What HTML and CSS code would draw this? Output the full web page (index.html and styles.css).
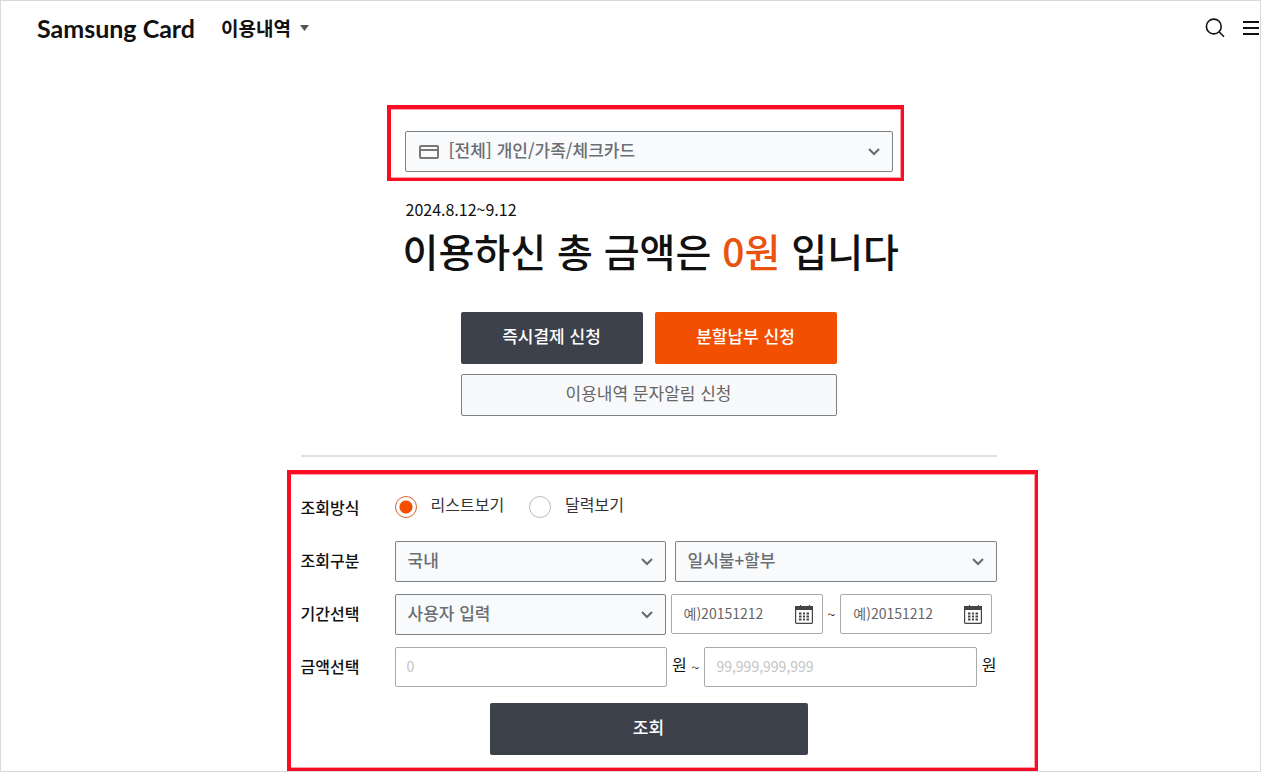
FILE: index.html
```html
<!DOCTYPE html>
<html lang="ko">
<head>
    <meta charset="UTF-8">
    <meta name="viewport" content="width=device-width, initial-scale=1.0">
    <title>이용내역 - Samsung Card</title>
    <link rel="stylesheet" href="styles.css">
</head>
<body>
    <header class="header">
        <a class="logo" href="#">Samsung Card</a>
        <button type="button" class="menu-title">이용내역
            <svg class="caret" width="9" height="6" viewBox="0 0 9 6"><path d="M0 0h9L4.500 6z" fill="#555"/></svg>
        </button>
        <div class="header-icons">
            <button type="button" class="icon-button" aria-label="검색">
                <svg width="20" height="20" viewBox="0 0 20 20" fill="none" stroke="#111" stroke-width="1.600"><circle cx="8.800" cy="8.500" r="7.400"/><path d="M14 13.800l5 5"/></svg>
            </button>
            <button type="button" class="icon-button" aria-label="전체메뉴">
                <svg width="16" height="14" viewBox="0 0 16 14" fill="#111"><path d="M0 0h16v2H0zM0 6h16v2H0zM0 12h16v2H0z"/></svg>
            </button>
        </div>
    </header>

    <main class="main">
        <div class="content">
            <section class="summary">
                <div class="card-box outlined">
                    <div class="select card-select">
                        <svg class="card-icon" width="20" height="14" viewBox="0 0 20 14" fill="none" stroke="#777" stroke-width="2"><rect x="1" y="1" width="18" height="12" rx="1"/><path d="M1 5h18"/></svg>
                        <select aria-label="카드 선택">
                            <option>[전체] 개인/가족/체크카드</option>
                        </select>
                        <svg class="chevron" width="12" height="8" viewBox="0 0 12 8"><path d="M1 1l5 5 5-5"/></svg>
                    </div>
                </div>
                <p class="period">2024.8.12~9.12</p>
                <h1>이용하신 총 금액은 <em>0원</em> 입니다</h1>
                <div class="actions">
                    <button type="button" class="button dark">즉시결제 신청</button>
                    <button type="button" class="button orange">분할납부 신청</button>
                    <button type="button" class="button light">이용내역 문자알림 신청</button>
                </div>
                <hr>
            </section>

            <form class="search outlined">
                <div class="row" role="radiogroup" aria-labelledby="view-label">
                    <span class="row-label" id="view-label">조회방식</span>
                    <div class="fields views">
                        <label class="radio"><input type="radio" name="view" checked><span>리스트보기</span></label>
                        <label class="radio"><input type="radio" name="view"><span>달력보기</span></label>
                    </div>
                </div>
                <div class="row">
                    <label class="row-label" for="region">조회구분</label>
                    <div class="fields types">
                        <div class="select short">
                            <select id="region">
                                <option>국내</option>
                                <option>해외</option>
                            </select>
                            <svg class="chevron" width="12" height="8" viewBox="0 0 12 8"><path d="M1 1l5 5 5-5"/></svg>
                        </div>
                        <div class="select">
                            <select aria-label="결제구분">
                                <option>일시불+할부</option>
                            </select>
                            <svg class="chevron" width="12" height="8" viewBox="0 0 12 8"><path d="M1 1l5 5 5-5"/></svg>
                        </div>
                    </div>
                </div>
                <div class="row">
                    <label class="row-label" for="range">기간선택</label>
                    <div class="fields dates">
                        <div class="select short">
                            <select id="range">
                                <option>사용자 입력</option>
                            </select>
                            <svg class="chevron" width="12" height="8" viewBox="0 0 12 8"><path d="M1 1l5 5 5-5"/></svg>
                        </div>
                        <div class="date">
                            <input type="text" placeholder="예)20151212" aria-label="시작일">
                            <button type="button" class="icon-button" aria-label="시작일 달력">
                                <svg width="18" height="19" viewBox="0 0 18 19"><rect x=".6" y="1.600" width="16.800" height="16.800" rx="1" fill="#fff" stroke="#444" stroke-width="1.200"/><path d="M0 1h3v1h2V0h1v1h6v1h2V0h1v1h3v4H0z" fill="#444"/><path d="M4 7.500h2.500v2H4zM8 7.500h2v2H8zM11.500 7.500H14v2h-2.500zM4 10.500h2.500v2H4zM8 10.500h2v2H8zM11.500 10.500H14v2h-2.500zM4 13.500h2.500v2H4zM8 13.500h2v2H8zM11.500 13.500H14v2h-2.500z" fill="#444"/></svg>
                            </button>
                        </div>
                        <span class="tilde">~</span>
                        <div class="date">
                            <input type="text" placeholder="예)20151212" aria-label="종료일">
                            <button type="button" class="icon-button" aria-label="종료일 달력">
                                <svg width="18" height="19" viewBox="0 0 18 19"><rect x=".6" y="1.600" width="16.800" height="16.800" rx="1" fill="#fff" stroke="#444" stroke-width="1.200"/><path d="M0 1h3v1h2V0h1v1h6v1h2V0h1v1h3v4H0z" fill="#444"/><path d="M4 7.500h2.500v2H4zM8 7.500h2v2H8zM11.500 7.500H14v2h-2.500zM4 10.500h2.500v2H4zM8 10.500h2v2H8zM11.500 10.500H14v2h-2.500zM4 13.500h2.500v2H4zM8 13.500h2v2H8zM11.500 13.500H14v2h-2.500z" fill="#444"/></svg>
                            </button>
                        </div>
                    </div>
                </div>
                <div class="row">
                    <label class="row-label" for="amount">금액선택</label>
                    <div class="fields amounts">
                        <input type="text" id="amount" class="amount" placeholder="0">
                        <span class="won">원</span>
                        <span class="tilde">~</span>
                        <input type="text" class="amount" placeholder="99,999,999,999" aria-label="최대 금액">
                        <span class="won">원</span>
                    </div>
                </div>
                <button type="submit" class="button dark submit">조회</button>
            </form>
        </div>
    </main>
</body>
</html>
```
FILE: styles.css
```css
* {
    box-sizing: border-box;
}

body {
    margin: 0;
    min-height: 100vh;
    border: 1px solid #d9d9d9;
    background-color: #fff;
    color: #111;
    font-family: "Noto Sans CJK KR", sans-serif;
    font-size: 16px;
    line-height: 24px;
}

button,
input,
select {
    margin: 0;
    font: inherit;
    color: inherit;
}

button {
    cursor: pointer;
}

svg {
    display: block;
}

.header {
    display: flex;
    align-items: center;
    height: 54px;
    padding: 0 1px 0 36px;
}

.logo {
    color: #111;
    font-family: Lato, sans-serif;
    font-size: 25px;
    font-weight: 700;
    text-decoration: none;
}

.menu-title {
    display: flex;
    align-items: center;
    gap: 9px;
    margin-left: 26px;
    padding: 0;
    border: 0;
    background: none;
    font-size: 19px;
    font-weight: 700;
}

.header-icons {
    display: flex;
    align-items: center;
    gap: 18px;
    margin-left: auto;
}

.icon-button {
    padding: 0;
    border: 0;
    background: none;
}

.main {
    padding: 50px 0 0 63px;
}

.content {
    max-width: 751px;
    margin: 0 auto;
}

/* red highlight frame */
.outlined {
    border: solid #f90d25;
    border-width: 4px 3px 3px 4px;
    box-shadow: inset -1px -1px #ffa0aa, inset 0 1px #ffa0aa;
}

.summary {
    margin: 0 41px 0 14px;
}

.card-box {
    margin: 0 93px 0 86px;
    padding: 22px 8px 6px 14px;
}

.select {
    display: flex;
    align-items: center;
    position: relative;
    flex: 1;
    height: 41px;
    border: 1px solid #7b8085;
    border-radius: 2px;
    background-color: #f8fafc;
    color: #6b6e72;
}

.select select {
    width: 100%;
    height: 100%;
    padding: 0 36px 4px 12px;
    border: 0;
    background: none;
    appearance: none;
    font-size: 17px;
    font-weight: 500;
}

.card-select select {
    padding-left: 43px;
}

/* icons lie over the native select */
.card-icon,
.chevron {
    position: absolute;
    pointer-events: none;
}

.card-icon {
    left: 13px;
}

.chevron {
    right: 12px;
    fill: none;
    stroke: #666a70;
    stroke-width: 2;
}

.period {
    margin: 16px 0 0 105px;
}

h1 {
    margin: 0 0 33px 102px;
    font-size: 39px;
    font-weight: 500;
    line-height: 58px;
}

h1 em {
    color: #e8540f;
    font-style: normal;
}

.actions {
    display: grid;
    grid-template-columns: 1fr 1fr;
    gap: 10px 12px;
    max-width: 376px;
    margin: 0 auto;
}

.button {
    height: 52px;
    padding: 0 0 4px;
    border: 0;
    border-radius: 2px;
    color: #fff;
    font-size: 17px;
    font-weight: 500;
}

.dark {
    background-color: #3d414c;
}

.orange {
    background-color: #f25000;
}

.light {
    grid-column: 1 / 3;
    height: 42px;
    border: 1px solid #7b8085;
    background-color: #f7f9fa;
    color: #666;
    font-weight: 400;
}

hr {
    height: 2px;
    margin: 39px 0 13px;
    border: 0;
    background-color: #e0e0e0;
}

.search {
    display: flex;
    flex-direction: column;
    gap: 12px;
    padding: 14px 38px 13px 10px;
}

.row {
    display: flex;
    align-items: flex-start;
    height: 41px;
}

.row-label {
    width: 94px;
    padding-top: 7px;
    font-weight: 500;
}

.fields {
    display: flex;
    align-items: flex-start;
    flex: 1;
}

.views {
    gap: 25px;
    padding-top: 4px;
}

.radio {
    display: flex;
    gap: 14px;
    color: #333;
}

.radio input {
    width: 22px;
    height: 22px;
    margin-top: 4px;
    border: 1px solid #bbb;
    border-radius: 50%;
    appearance: none;
}

.radio input:checked {
    border-color: #d8622c;
    background: radial-gradient(circle, #f25000 6px, #fff 7px);
}

.select.short {
    flex: 0 0 271px;
}

.types {
    gap: 9px;
}

.date {
    display: flex;
    align-items: center;
    width: 152px;
    height: 40px;
    margin-left: 5px;
    padding-right: 9px;
    border: 1px solid #aaa;
    border-radius: 2px;
}

.date input {
    flex: 1;
    min-width: 0;
    padding: 0 0 2px 12px;
    border: 0;
    background: none;
    font-size: 14px;
}

.date input::placeholder {
    color: #666;
}

.tilde {
    padding-top: 8px;
    font-size: 14px;
}

.dates .tilde {
    margin-left: 5px;
}

.amounts {
    gap: 5px;
}

.amount {
    flex: 1;
    min-width: 0;
    height: 40px;
    padding: 0 11px 2px;
    border: 1px solid #aaa;
    border-radius: 2px;
    font-size: 14px;
}

.amount::placeholder {
    color: #c4c4c4;
}

.won {
    padding-top: 5px;
}

.submit {
    align-self: center;
    width: 318px;
    margin-top: 3px;
}
```
